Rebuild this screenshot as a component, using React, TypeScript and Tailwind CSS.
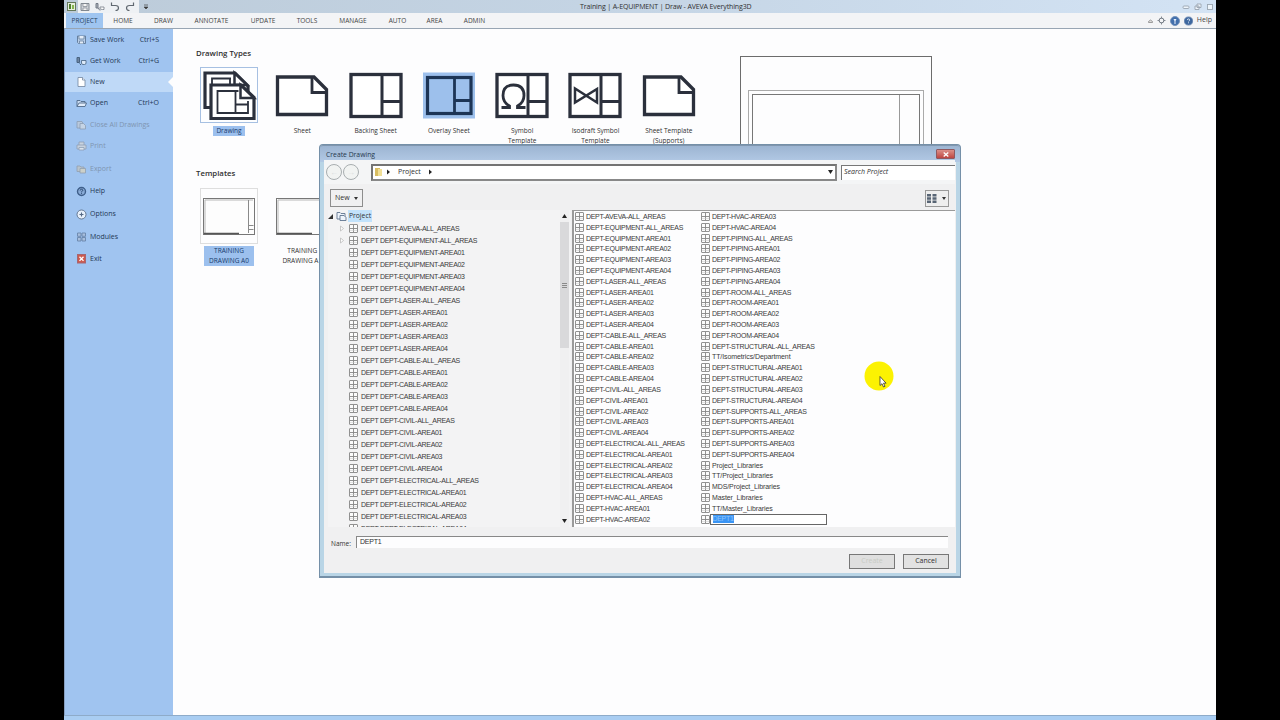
import type { ReactNode } from "react";
import clsx from "clsx";

const tabs = [
  { label: "HOME", width: "w-[20px]", gap: "ml-[17px]" },
  { label: "DRAW", width: "w-[21px]", gap: "ml-[20px]" },
  { label: "ANNOTATE", width: "w-[37px]", gap: "ml-[19px]" },
  { label: "UPDATE", width: "w-[26px]", gap: "ml-[20px]" },
  { label: "TOOLS", width: "w-[22px]", gap: "ml-[20px]" },
  { label: "MANAGE", width: "w-[30px]", gap: "ml-[20px]" },
  { label: "AUTO", width: "w-[19px]", gap: "ml-[20px]" },
  { label: "AREA", width: "w-[17px]", gap: "ml-[19px]" },
  { label: "ADMIN", width: "w-[23px]", gap: "ml-[20px]" },
];

const areas = (name: string) => [
  `${name}-ALL_AREAS`,
  `${name}-AREA01`,
  `${name}-AREA02`,
  `${name}-AREA03`,
  `${name}-AREA04`,
];

const departments = [
  "DEPT-AVEVA-ALL_AREAS",
  ...areas("DEPT-EQUIPMENT"),
  ...areas("DEPT-LASER"),
  ...areas("DEPT-CABLE"),
  ...areas("DEPT-CIVIL"),
  ...areas("DEPT-ELECTRICAL"),
];

const firstColumn = [...departments, ...areas("DEPT-HVAC").slice(0, 3)];

const structural = areas("DEPT-STRUCTURAL");

const secondColumn = [
  ...areas("DEPT-HVAC").slice(3),
  ...areas("DEPT-PIPING"),
  ...areas("DEPT-ROOM"),
  structural[0],
  "TT/Isometrics/Department",
  ...structural.slice(1),
  ...areas("DEPT-SUPPORTS"),
  "Project_Libraries",
  "TT/Project_Libraries",
  "MDS/Project_Libraries",
  "Master_Libraries",
  "TT/Master_Libraries",
];

function SaveIcon() {
  return (
    <svg width="11" height="10" viewBox="0 0 11 10" fill="none" stroke="#66809f">
      <path d="M1.5 1h8v7.5h-7l-1-1z" fill="#b9cde6" />
      <path d="M3 1v3h5V1M3.500 8.500V6h4v2.500" fill="#e4edf8" strokeWidth=".8" />
    </svg>
  );
}

function GetIcon() {
  return (
    <svg width="11" height="10" viewBox="0 0 11 10" fill="none" stroke="#48627f">
      <path d="M1 1.500h2.500v5H1z" fill="#6d84a2" />
      <path d="M3.500 7.500L5 9" />
      <path d="M5.500 4.500h4.500V7a1.500 1.500 0 0 1-1.500 1.500H7A1.500 1.500 0 0 1 5.500 7z" fill="#dce9f8" strokeWidth=".8" />
    </svg>
  );
}

function NewIcon() {
  return (
    <svg width="11" height="10" viewBox="0 0 11 10" fill="#fff" stroke="#7185a0" strokeWidth=".8">
      <path d="M2 .5h4.500L9 3v6.500H2z" />
      <path d="M6.500.5V3H9" />
    </svg>
  );
}

function OpenIcon() {
  return (
    <svg width="11" height="10" viewBox="0 0 11 10" fill="#c8dbf2" stroke="#506a89" strokeWidth=".9">
      <path d="M1 8.500v-6h3l1 1h4v1.500" />
      <path d="M1 8.500L3 5h7.500L9 8.500z" fill="#e1ecfa" />
    </svg>
  );
}

function CloseAllIcon() {
  return (
    <svg width="11" height="10" viewBox="0 0 11 10" fill="#b9c9dc" stroke="#8c9db2" strokeWidth=".8">
      <path d="M1 8V1.500h5l1 2V8z" />
      <path d="M4 9V3.500h3.500l2 2V9z" fill="#c5d4e5" />
    </svg>
  );
}

function PrintIcon() {
  return (
    <svg width="11" height="10" viewBox="0 0 11 10" fill="#c8d3df" stroke="#8f9fb4" strokeWidth=".8">
      <path d="M3 4V1h5v3" />
      <path d="M1 4h9v4H1z" />
      <path d="M3 6.500h5V9H3z" fill="#dde5ee" />
    </svg>
  );
}

function ExportIcon() {
  return (
    <svg width="11" height="10" viewBox="0 0 11 10" fill="#b9c4cc" stroke="#929fae" strokeWidth=".8">
      <path d="M1 7.500V2h3l1 1h3v4.500z" />
      <path d="M4 4.500h5.500V9H4z" fill="#ccd0c9" />
    </svg>
  );
}

function HelpIcon() {
  return (
    <svg width="11" height="11" viewBox="0 0 11 11" fill="none" stroke="#3f5f8a">
      <circle cx="5.500" cy="5.500" r="4" fill="#88aad6" strokeWidth="1.400" />
      <path d="M4.200 4.500q0-1.200 1.300-1.200t1.300 1q0 .8-1.300 1.400v.6M5.500 7.200v.8" stroke="#2e4c75" />
    </svg>
  );
}

function OptionsIcon() {
  return (
    <svg width="11" height="11" viewBox="0 0 11 11" fill="none" stroke="#5a6d87">
      <circle cx="5.500" cy="5.500" r="4.500" fill="#e7f0fb" strokeWidth=".9" />
      <path d="M5.500 3.500v4M3.500 5.500h4" stroke="#566a86" />
      <circle cx="5.500" cy="5.500" r="1" fill="#566a86" stroke="none" />
    </svg>
  );
}

function ModulesIcon() {
  return (
    <svg width="11" height="10" viewBox="0 0 11 10" fill="#a9bfdd" stroke="#6a86aa" strokeWidth=".9">
      <path d="M1.500 1h3.500v3.300H1.500zM6 1h3.500v3.300H6zM1.500 5.500H5v3.500H1.500zM6 5.500h3.500v3.500H6z" />
    </svg>
  );
}

function ExitIcon() {
  return (
    <svg width="11" height="10" viewBox="0 0 11 10" fill="none">
      <rect x="1.500" y=".5" width="8" height="8.500" fill="#cc5a4e" stroke="#a76570" />
      <path d="M3.500 2.700l4 4.200M7.500 2.700l-4 4.200" stroke="#fff" strokeWidth="1.300" />
    </svg>
  );
}

const menuItems: {
  label: string;
  icon: ReactNode;
  height: string;
  shortcut?: string;
  active?: boolean;
  disabled?: boolean;
}[] = [
  { label: "Save Work", icon: <SaveIcon />, height: "h-[21px]", shortcut: "Ctrl+S" },
  { label: "Get Work", icon: <GetIcon />, height: "h-[22px]", shortcut: "Ctrl+G" },
  { label: "New", icon: <NewIcon />, height: "h-[20px]", active: true },
  { label: "Open", icon: <OpenIcon />, height: "h-[22px]", shortcut: "Ctrl+O" },
  { label: "Close All Drawings", icon: <CloseAllIcon />, height: "h-[21px]", disabled: true },
  { label: "Print", icon: <PrintIcon />, height: "h-[22px]", disabled: true },
  { label: "Export", icon: <ExportIcon />, height: "h-[23px]", disabled: true },
  { label: "Help", icon: <HelpIcon />, height: "h-[22px]" },
  { label: "Options", icon: <OptionsIcon />, height: "h-[24px]" },
  { label: "Modules", icon: <ModulesIcon />, height: "h-[22px]" },
  { label: "Exit", icon: <ExitIcon />, height: "h-[21px]" },
];

function DrawingIcon() {
  return (
    <svg width="58" height="56" viewBox="0 0 58 56" fill="#fff" stroke="#2b303c" strokeWidth="3.200">
      <rect x=".5" y=".5" width="57" height="55" fill="#fdfeff" stroke="#a6c0e2" strokeWidth="1" />
      <path d="M5 40.500V6h30L48 19v21.500z" />
      <path d="M34.500 6v12H47z" strokeWidth="2.500" />
      <path d="M12 19v-7.500h19M30 12v6" fill="none" strokeWidth="1.800" />
      <path d="M11 51.500V18h30L54 30.500v21z" />
      <path d="M40.500 18v13H54z" strokeWidth="2.500" />
      <path d="M17.500 24h18v22h-18zM35.500 24h3M35.500 31.500V46H48V34M35.500 37.500H48" fill="none" strokeWidth="1.800" />
    </svg>
  );
}

function SheetIcon() {
  return (
    <svg width="58" height="56" viewBox="0 0 58 56" fill="#fff" stroke="#2b303c" strokeWidth="3.300">
      <path d="M4.500 10h36.500L53.500 22.500V47.500H4.500z" />
      <path d="M39 10v15.500H53" fill="none" strokeWidth="2.800" />
    </svg>
  );
}

function BackingIcon({ children }: { children?: ReactNode }) {
  return (
    <svg width="58" height="56" viewBox="0 0 58 56" fill="#fff" stroke="#2b303c" strokeWidth="3.300">
      <rect x="4" y="7.500" width="50" height="42" />
      <path d="M35 7v42M35 34.500h19" strokeWidth="3" />
      {children}
    </svg>
  );
}

function OverlayIcon() {
  return (
    <svg width="58" height="56" viewBox="0 0 58 56" fill="none" stroke="#1d3556" strokeWidth="3.200">
      <rect x="3" y="5.500" width="52" height="46" fill="#9dc0ec" stroke="none" />
      <rect x="7.500" y="10.500" width="43.500" height="36" />
      <path d="M34.500 10.500v36M34.500 33.500h16" strokeWidth="2.800" />
    </svg>
  );
}

const drawingTypes: { label: string[]; icon: ReactNode; active?: boolean }[] = [
  { label: ["Drawing"], icon: <DrawingIcon />, active: true },
  { label: ["Sheet"], icon: <SheetIcon /> },
  { label: ["Backing Sheet"], icon: <BackingIcon /> },
  { label: ["Overlay Sheet"], icon: <OverlayIcon /> },
  {
    label: ["Symbol", "Template"],
    icon: (
      <BackingIcon>
        <path
          d="M8.500 40.500h8v-1.500Q10 35.500 10 28.500Q10 18 20.500 18T31 28.500Q31 35.500 24.500 39v1.500h8"
          fill="none"
          strokeWidth="2.800"
        />
      </BackingIcon>
    ),
  },
  {
    label: ["Isodraft Symbol", "Template"],
    icon: (
      <BackingIcon>
        <path d="M9 21.500v14L31 22v13.500z" strokeWidth="2.500" />
      </BackingIcon>
    ),
  },
  { label: ["Sheet Template", "(Supports)"], icon: <SheetIcon /> },
];

function TemplateThumb({ active }: { active?: boolean }) {
  return (
    <svg width="58" height="56" viewBox="0 0 58 56" fill="none" stroke="#777" strokeWidth="1">
      {active && <rect x=".5" y=".5" width="57" height="55" stroke="#dedede" />}
      <rect x="3.500" y="10.500" width="51" height="36" fill="#fdfdfd" />
      <path d="M5 12h48M5 12v33" stroke="#b7b7b7" />
      <path d="M48.500 12v33M48.500 37.500h5M48.500 41.500h5" stroke="#8a8a8a" />
      <path d="M4 45.500h35" stroke="#555" strokeWidth="1.500" />
    </svg>
  );
}

function GridIcon() {
  return (
    <svg className="shrink-0" width="9" height="9" viewBox="0 0 9 9" fill="#fbfbfb" stroke="#858585" strokeWidth=".9">
      <rect x=".5" y=".5" width="8" height="8" rx=".5" />
      <path d="M4.500 1v7M1 4.500h7" />
      <path d="M1 6.500h7" stroke="#c5c5c5" strokeWidth=".5" />
    </svg>
  );
}

function Entry({ name, tree }: { name: string; tree?: boolean }) {
  const upper = name.startsWith("DEPT");
  return (
    <div className={clsx("flex items-center", tree ? "h-[12.03px] gap-[3px]" : "h-[10.82px] gap-[2.500px]")}>
      <GridIcon />
      <span
        className={clsx(
          "font-['Liberation_Sans',sans-serif] text-[7px] leading-none whitespace-nowrap text-[#3a3a3a]",
          upper ? "tracking-[-0.3px]" : "tracking-[-0.1px]",
        )}
      >
        {name}
      </span>
    </div>
  );
}

function TitleBar() {
  return (
    <div className="flex h-[13px] items-center bg-linear-to-r from-[#bccbd9] via-[#c5d5e5] to-[#d3e3f4] text-[#303030]">
      <div className="flex h-full w-[14px] items-center justify-center">
        <svg width="9" height="9" viewBox="0 0 9 9">
          <rect x=".5" y=".5" width="8" height="8" fill="#e6efdc" stroke="#64785b" />
          <path d="M2 2h2v5H2z" fill="#507d2f" />
          <path d="M5 3h2v4H5z" fill="#84b64e" />
        </svg>
      </div>
      <div className="flex h-full w-[61px] items-center gap-[5px] bg-[#eef1f4] pl-[2px]">
        <svg width="10" height="10" viewBox="0 0 10 10" fill="#d1d5da" stroke="#818890">
          <path d="M1 1.500h8v7H1z" />
          <path d="M3 2v2.500h4V2M3 8V6h4v2" strokeWidth=".7" fill="#f4f4f4" />
        </svg>
        <svg width="10" height="10" viewBox="0 0 10 10" fill="#acb2ba" stroke="#737b86">
          <path d="M1 1.500h2v4.500H1zM3 6l2 2.500" />
          <path d="M5 5h4v2.500H7.500L5 7z" fill="#fff" strokeWidth=".8" />
        </svg>
        <svg width="10" height="10" viewBox="0 0 10 10" fill="none" stroke="#606870" strokeWidth="1.200">
          <path d="M1.500 3.500h4Q8.500 3.500 8.500 6T5.500 8.500M1.500.5v3h3" />
        </svg>
        <svg width="10" height="10" viewBox="0 0 10 10" fill="none" stroke="#606870" strokeWidth="1.200">
          <path d="M8.500 3.500h-4Q1.500 3.500 1.500 6T4.500 8.500M8.500.5v3h-3" />
        </svg>
      </div>
      <svg className="ml-[5px]" width="4" height="6" viewBox="0 0 4 6">
        <path d="M0 1h4M0 3h4L2 5z" stroke="#444" strokeWidth=".7" fill="#333" />
      </svg>
      <span className="ml-[432px] w-[181px] pt-px text-[7px] tracking-[-0.12px] whitespace-nowrap">
        Training | A-EQUIPMENT | Draw - AVEVA Everything3D
      </span>
      <svg className="mr-[2px] ml-auto" width="32" height="8" viewBox="0 0 32 8" fill="#eef5fb" stroke="#9aa5b0" strokeWidth=".9">
        <rect x="1" y="3" width="6" height="2.500" rx="1" />
        <path d="M15 1h4v3.500h-4zM13 3h4v3.500h-4z" />
        <rect x="25.500" y="1.500" width="5" height="5" />
      </svg>
    </div>
  );
}

function TabStrip() {
  return (
    <div className="flex h-[16px] items-center border-b border-[#98a5b3] bg-[#f3f4f6] text-[6.5px] text-[#454545]">
      <div className="ml-[2px] flex h-full w-[37px] items-center justify-center bg-[#9fc5f0] text-[#27415f]">
        PROJECT
      </div>
      <div className="-ml-[7px] flex">
        {tabs.map((tab) => (
          <span key={tab.label} className={clsx("flex justify-center whitespace-nowrap", tab.width, tab.gap)}>
            {tab.label}
          </span>
        ))}
      </div>
      <div className="mr-[4px] ml-auto flex items-center gap-[4px]">
        <svg width="5" height="4" viewBox="0 0 5 4" fill="#ddd" stroke="#888" strokeWidth=".8">
          <path d="M.5 3.500v-1l2-1.500 2 1.500v1z" />
        </svg>
        <svg width="9" height="9" viewBox="0 0 9 9" fill="none" stroke="#6f7780">
          <circle cx="4.500" cy="4.500" r="2.400" />
          <path d="M4.500 .5v2M4.500 6.500v2M.5 4.500h2M6.500 4.500h2" strokeWidth=".8" />
        </svg>
        <svg width="10" height="10" viewBox="0 0 10 10">
          <circle cx="5" cy="5" r="4.500" fill="#426fac" stroke="#7895bc" />
          <path d="M3.500 3h3L5.500 5v3h-1V5z" fill="#e9f2fc" />
        </svg>
        <svg width="9" height="10" viewBox="0 0 10 10">
          <circle cx="5" cy="5" r="4.500" fill="#3d679f" stroke="#6685b0" />
          <path d="M3.700 4q0-1.300 1.300-1.300T6.300 4Q6.300 4.800 5 5.300M5 6.500v1" fill="none" stroke="#e9f2fc" />
        </svg>
        <span className="text-[7px]">Help</span>
      </div>
    </div>
  );
}

function Sidebar() {
  return (
    <nav className="w-[109px] shrink-0 border-l border-[#879fbf] bg-[#a0c4f0] text-[7px] text-[#1f3855]">
      {menuItems.map((item) => (
        <div
          key={item.label}
          className={clsx(
            "flex items-center pl-[11px]",
            item.height,
            item.active && "bg-[#bfd9f7]",
            item.disabled && "text-[#7f95b1]",
          )}
        >
          {item.icon}
          <span className="ml-[3px] pt-px whitespace-nowrap">{item.label}</span>
          {item.shortcut && <span className="mr-[14px] ml-auto pt-px">{item.shortcut}</span>}
          {item.active && (
            <svg className="ml-auto" width="5" height="10" viewBox="0 0 5 10">
              <path d="M5 0v10L0 5z" fill="#fdfdfd" />
            </svg>
          )}
        </div>
      ))}
    </nav>
  );
}

function NewPage() {
  return (
    <main className="flex flex-1 bg-[#fdfdfe] text-[#303030]">
      <div className="w-[551px] pt-[18px] pl-[22px]">
        <h2 className="h-[19px] pl-px text-[7.8px] leading-[13px] font-semibold">Drawing Types</h2>
        <div className="flex gap-[5.3px]">
          {drawingTypes.map((type) => (
            <div key={type.label[0]} className="flex h-[83px] w-[68px] shrink-0 flex-col items-center overflow-hidden">
              <span className="mt-px">{type.icon}</span>
              <span
                className={clsx(
                  "mt-[3px] flex flex-col items-center px-[3px] text-[6.5px] leading-[10px] whitespace-nowrap",
                  type.active && "bg-[#9cc0ee] text-[#173b6c]",
                )}
              >
                {type.label.map((line) => (
                  <span key={line}>{line}</span>
                ))}
              </span>
            </div>
          ))}
        </div>
        <h2 className="mt-[18px] h-[20px] pl-px text-[7.8px] leading-[13px] font-semibold">Templates</h2>
        <div className="flex gap-[5.3px] text-[6.5px] leading-[10px]">
          {["A0", "A1"].map((size) => (
            <div key={size} className="flex w-[68px] flex-col items-center">
              <span className="mt-px">
                <TemplateThumb active={size === "A0"} />
              </span>
              <span
                className={clsx(
                  "mt-[2px] w-[50px] text-center whitespace-nowrap",
                  size === "A0" && "bg-[#9cc0ee] text-[#173b6c]",
                )}
              >
                TRAINING
                <br />
                DRAWING {size}
              </span>
            </div>
          ))}
        </div>
      </div>
      <div className="mt-[27px] ml-[16px] h-[240px] w-[192px] border border-[#6c6c6c] px-[7px] pt-[33px]">
        <div className="h-[120px] border border-[#aaa] p-[3px]">
          <div className="flex h-full justify-end border border-[#777]">
            <div className="w-[20px] border-l border-[#999]" />
          </div>
        </div>
      </div>
    </main>
  );
}

function AddressBar() {
  return (
    <div className="flex h-[24px] items-center pl-[2px]">
      <div className="flex w-[45px]">
        <span className="flex size-[16px] items-center justify-center rounded-full border border-[#a8aeb0] bg-[#f1f3f2] text-[8px] text-[#dadddd]">
          ←
        </span>
        <span className="ml-px flex size-[16px] items-center justify-center rounded-full border border-[#a8aeb0] bg-[#f1f3f2] text-[8px] text-[#dadddd]">
          →
        </span>
      </div>
      <div className="flex h-[17px] w-[466px] items-center border-2 border-[#737373] border-r-[#888] border-b-[#888] bg-white pl-[2px]">
        <svg width="8" height="10" viewBox="0 0 8 10">
          <path d="M0 1h5v8H0z" fill="#d8bd62" />
          <path d="M3 2h4v7H3z" fill="#f1df96" />
        </svg>
        <svg className="ml-[4px]" width="3" height="6" viewBox="0 0 3 6">
          <path d="M0 .5v5L3 3z" fill="#222" />
        </svg>
        <span className="ml-[8px] w-[23px] text-[7px]">Project</span>
        <svg className="ml-[8px]" width="3" height="6" viewBox="0 0 3 6">
          <path d="M0 .5v5L3 3z" fill="#222" />
        </svg>
        <svg className="mr-[2px] ml-auto" width="5" height="4" viewBox="0 0 5 4">
          <path d="M0 0h5L2.500 4z" fill="#222" />
        </svg>
      </div>
      <div className="ml-[4px] flex h-[15px] flex-1 items-center border-t border-l border-[#777] bg-white pl-[2px] text-[7px] italic">
        Search Project
      </div>
    </div>
  );
}

function Tree() {
  return (
    <div className="flex h-[317px] w-[243px] overflow-hidden bg-[#f3f3f4]">
      <div className="w-[232px]">
        <div className="flex h-[12px] items-center">
          <svg width="5" height="5" viewBox="0 0 5 5">
            <path d="M5 0v5H0z" fill="#333" />
          </svg>
          <svg className="ml-[3px]" width="11" height="10" viewBox="0 0 11 10" fill="#eef4fb" stroke="#60758e" strokeWidth=".9">
            <path d="M1 8V1.500h3l1 1h4v5.500z" />
            <path d="M4 4.500h4l2 2v3H4z" />
          </svg>
          <span className="ml-px flex h-[12px] w-[24px] items-center justify-center bg-[#c2e2fb] text-[6.8px]">
            Project
          </span>
        </div>
        {departments.map((name, index) => (
          <div key={name} className="flex h-[12.03px] items-center">
            <span className="flex w-[21px] justify-end pr-[5px]">
              {index < 2 && (
                <svg width="4" height="7" viewBox="0 0 4 7" fill="#fff" stroke="#bbb" strokeWidth=".8">
                  <path d="M.5 1v5L3.500 3.500z" />
                </svg>
              )}
            </span>
            <Entry name={`DEPT ${name}`} tree />
          </div>
        ))}
      </div>
      <div className="flex w-[9px] flex-col items-center bg-[#f0f0f1]">
        <svg className="mt-[4px]" width="5" height="4" viewBox="0 0 5 4">
          <path d="M0 4h5L2.500 0z" fill="#222" />
        </svg>
        <div className="mt-[4px] flex h-[126px] w-[9px] items-center justify-center bg-[#d9d9db]">
          <div className="flex size-[5px] flex-col justify-between">
            <span className="h-px bg-[#8a8a8a]" />
            <span className="h-px bg-[#8a8a8a]" />
            <span className="h-px bg-[#8a8a8a]" />
          </div>
        </div>
        <svg className="mt-auto mb-[4px]" width="5" height="4" viewBox="0 0 5 4">
          <path d="M0 0h5L2.500 4z" fill="#222" />
        </svg>
      </div>
    </div>
  );
}

function CreateDrawingDialog() {
  return (
    <div className="absolute top-[144px] left-[319px] flex h-[434px] w-[642px] flex-col rounded-t-[4px] border border-b-2 border-[#7590a8] bg-[#b9d5e6] px-[4px] pb-[3px] text-[#303030]">
      <div className="-mx-[4px] flex h-[17px] shrink-0 items-center rounded-t-[3px] border-t border-[#8096ae] bg-linear-to-b from-[#9db5d2] to-[#b2c9e5] pr-[5px] pl-[6px] text-[6.8px]">
        <span className="pt-[2px] text-[#26384e]">Create Drawing</span>
        <div className="ml-auto flex h-[10px] w-[19px] items-center justify-center rounded-[1px] border border-[#8f5960] bg-linear-to-b from-[#db8e88] to-[#be4542]">
          <svg width="6" height="5" viewBox="0 0 6 5">
            <path d="M.7.5l4.600 4M5.300.5l-4.600 4" stroke="#fff" strokeWidth="1.300" />
          </svg>
        </div>
      </div>
      <div className="flex flex-1 flex-col bg-[#f0f0f1] pr-px">
        <div className="-mt-[2px] bg-[#f4f5f6]">
          <AddressBar />
        </div>
        <div className="flex h-[26px] items-center justify-between px-[6px] pt-[2px]">
          <div className="flex h-[18px] w-[33px] items-center border border-[#8d8d8d] pl-[4px] text-[7px]">
            New
            <svg className="mr-[4px] ml-auto" width="4" height="3" viewBox="0 0 4 3">
              <path d="M0 0h4L2 3z" fill="#333" />
            </svg>
          </div>
          <div className="flex h-[17px] w-[24px] items-center border border-[#999] bg-[#eee] pl-px">
            <svg width="10" height="9" viewBox="0 0 10 9">
              <path
                d="M0 0h4v2.500H0zM5.500 0h4v2.500h-4zM0 3.200h4v2.500H0zM5.500 3.200h4v2.500h-4zM0 6.500h4V9H0zM5.500 6.500h4V9h-4z"
                fill="#586575"
              />
            </svg>
            <svg className="ml-[5px]" width="4" height="3" viewBox="0 0 4 3">
              <path d="M0 0h4L2 3z" fill="#333" />
            </svg>
          </div>
        </div>
        <div className="flex h-[317px] pl-[4px]">
          <Tree />
          <div className="ml-px flex flex-1 overflow-hidden border-t border-l-2 border-[#9a9a9a] bg-[#fdfdfe]">
            <div className="w-[126px] pl-[0.5px]">
              {firstColumn.map((name) => (
                <Entry key={name} name={name} />
              ))}
            </div>
            <div className="pl-[0.5px]">
              {secondColumn.map((name) => (
                <Entry key={name} name={name} />
              ))}
              <div className="flex h-[10.82px] items-center">
                <GridIcon />
                <div className="flex h-[11px] w-[117px] items-center border border-[#666] bg-white pl-[2px]">
                  <span className="flex h-[8px] w-[21px] items-center bg-[#3a94f4] font-['Liberation_Sans',sans-serif] text-[7px] tracking-[-0.3px] text-[#8cc4fb]">
                    DEPT1
                  </span>
                </div>
              </div>
            </div>
          </div>
        </div>
        <div className="mt-[9px] flex h-[12px] items-center pr-[7px] pl-[7px] text-[6.5px]">
          <span className="w-[25px] pt-[3px]">Name:</span>
          <div className="flex h-[12px] flex-1 items-center border-t border-l border-[#888] bg-[#fdfdfe] pl-[3px] font-['Liberation_Sans',sans-serif] text-[7px] tracking-[-0.2px]">
            DEPT1
          </div>
        </div>
        <div className="mt-[6px] flex h-[15px] justify-end gap-[8px] pr-[6px] text-[7px]">
          <div className="flex w-[46px] items-center justify-center border border-[#777] bg-[#dfdfdf] text-[#c8cbc4]">
            Create
          </div>
          <div className="flex w-[46px] items-center justify-center border border-[#777] bg-[#e2e2e2]">Cancel</div>
        </div>
      </div>
    </div>
  );
}

export default function App() {
  return (
    <div className="relative flex h-[720px] w-[1280px] justify-center overflow-hidden bg-black font-['Open_Sans',sans-serif]">
      <div className="flex h-full w-[1152px] flex-col">
        <TitleBar />
        <TabStrip />
        <div className="flex flex-1">
          <Sidebar />
          <NewPage />
        </div>
        <div className="h-[5px] border-t border-[#8eabc9] bg-[#a9cdf2]" />
      </div>
      <CreateDrawingDialog />
      <svg className="absolute top-[361px] left-[864px]" width="30" height="31" viewBox="0 0 30 31">
        <circle cx="15" cy="15" r="14.500" fill="#fcf202" />
        <path
          d="M16 15.500v9l2-1.800 1.500 3.300 1.500-.7-1.500-3.100h2.600z"
          fill="#fff"
          stroke="#333"
          strokeWidth=".8"
        />
      </svg>
    </div>
  );
}
